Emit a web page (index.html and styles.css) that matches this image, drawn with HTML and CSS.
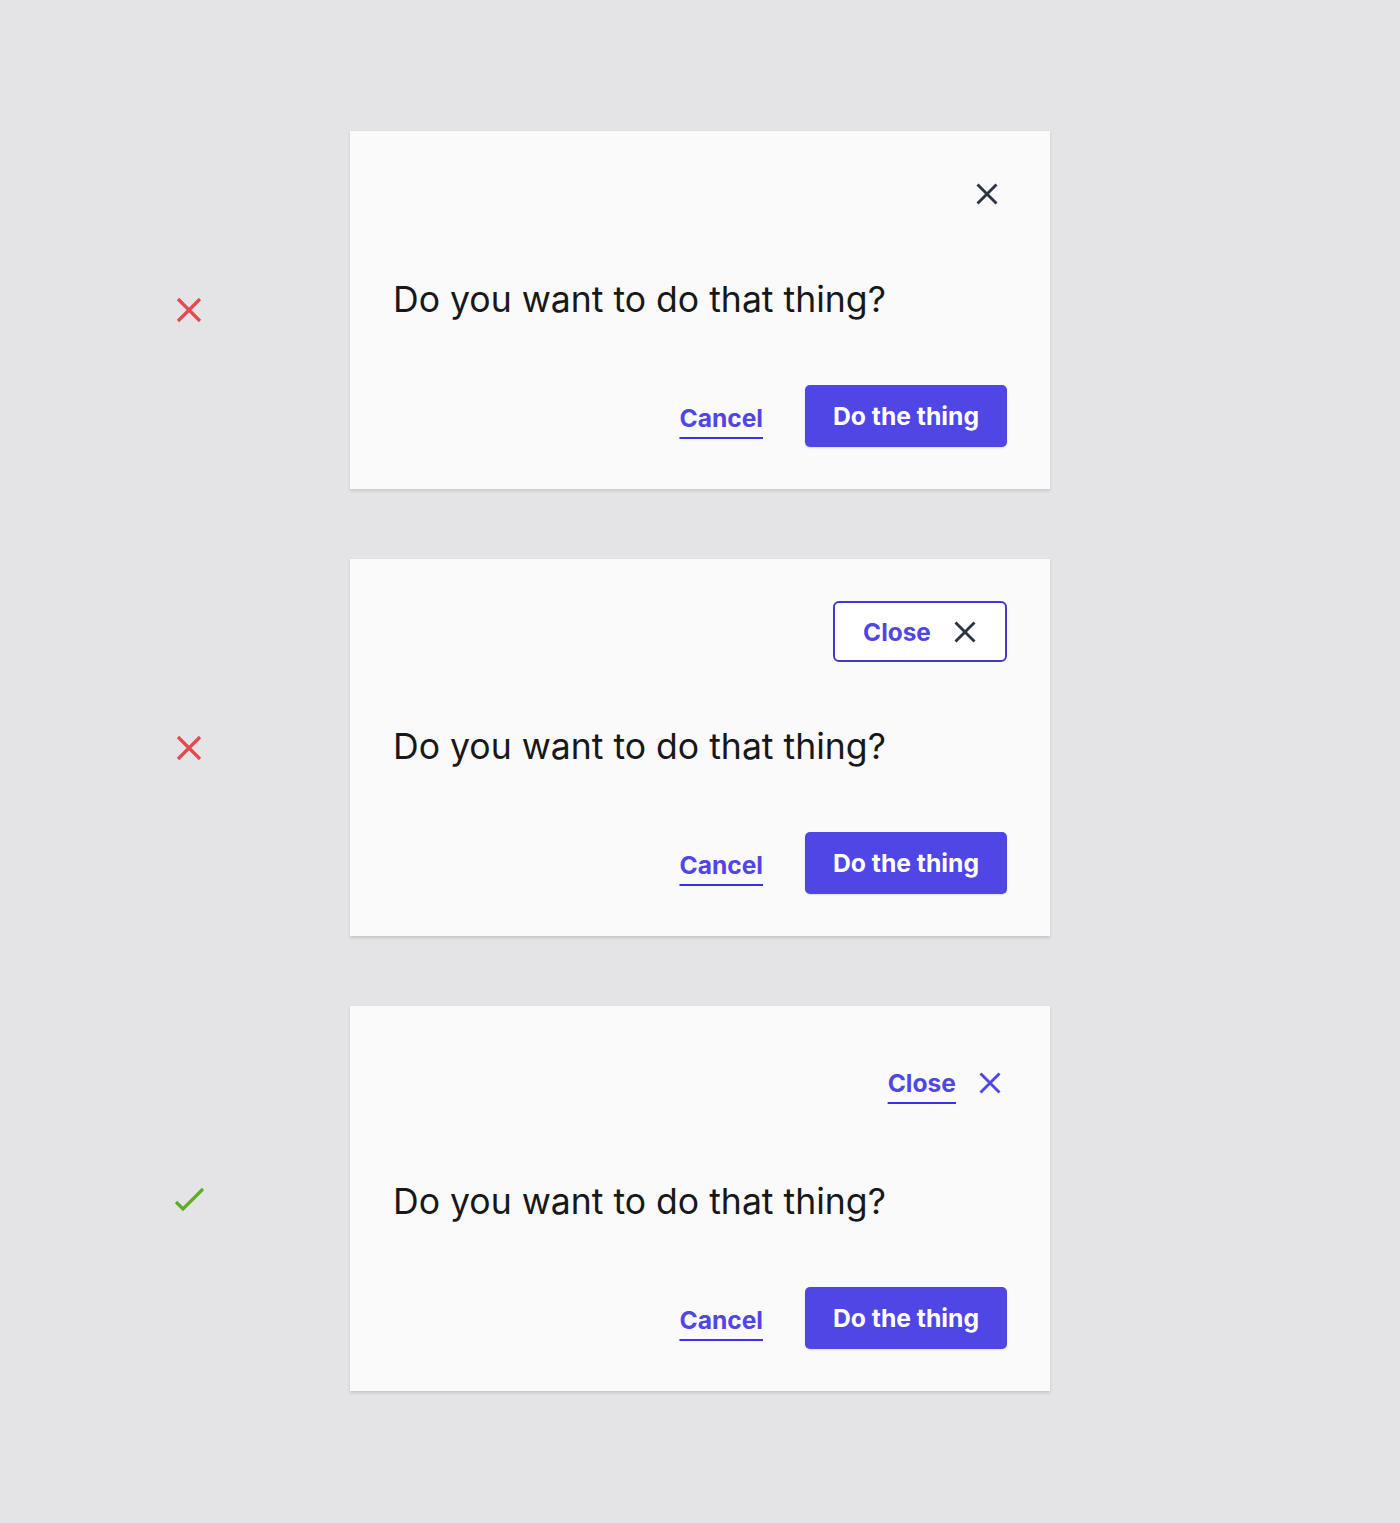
FILE: index.html
```html
<!DOCTYPE html>
<html lang="en">
<head>
<meta charset="utf-8">
<title>Dialog close patterns</title>
<link rel="stylesheet" href="styles.css">
</head>
<body>
<main class="page">
  <section class="row">
    <div class="verdict">
      <svg class="mark bad" viewBox="0 0 32 32" width="32" height="32" aria-label="Wrong"><path d="M5 5L27 27M27 5L5 27"/></svg>
    </div>
    <div class="card">
      <div class="card-head head-icon">
        <button class="icon-btn" aria-label="Close">
          <svg class="x dark" viewBox="0 0 24 24" width="24" height="24"><path d="M2.5 2.5L21.5 21.5M21.5 2.5L2.5 21.5"/></svg>
        </button>
      </div>
      <h2 class="question">Do you want to do that thing?</h2>
      <div class="actions">
        <a class="link" href="#">Cancel</a>
        <button class="primary">Do the thing</button>
      </div>
    </div>
    <div></div>
  </section>

  <section class="row">
    <div class="verdict">
      <svg class="mark bad" viewBox="0 0 32 32" width="32" height="32" aria-label="Wrong"><path d="M5 5L27 27M27 5L5 27"/></svg>
    </div>
    <div class="card">
      <div class="card-head head-button">
        <button class="outline">Close
          <svg class="x dark" viewBox="0 0 24 24" width="24" height="24"><path d="M2.5 2.5L21.5 21.5M21.5 2.5L2.5 21.5"/></svg>
        </button>
      </div>
      <h2 class="question">Do you want to do that thing?</h2>
      <div class="actions">
        <a class="link" href="#">Cancel</a>
        <button class="primary">Do the thing</button>
      </div>
    </div>
    <div></div>
  </section>

  <section class="row">
    <div class="verdict">
      <svg class="mark good" viewBox="0 0 32 32" width="32" height="32" aria-label="Right"><path d="M3 19L10 26L30 6"/></svg>
    </div>
    <div class="card">
      <div class="card-head head-link">
        <a class="link close-link" href="#">Close</a>
        <svg class="x purple" viewBox="0 0 24 24" width="24" height="24"><path d="M2.5 2.5L21.5 21.5M21.5 2.5L2.5 21.5"/></svg>
      </div>
      <h2 class="question">Do you want to do that thing?</h2>
      <div class="actions">
        <a class="link" href="#">Cancel</a>
        <button class="primary">Do the thing</button>
      </div>
    </div>
    <div></div>
  </section>
</main>
</body>
</html>
```

FILE: styles.css
```css
* { box-sizing: border-box; }

html, body {
  margin: 0;
  padding: 0;
}

body {
  background: #e4e4e7;
  font-family: "Inter", "Noto Sans", sans-serif;
  color: #18181b;
}

.page {
  padding: 131px 0 132px;
  display: flex;
  flex-direction: column;
  gap: 70px;
}

.row {
  display: grid;
  grid-template-columns: 1fr 700px 1fr;
  align-items: center;
}

.verdict {
  justify-self: end;
  margin-right: 145px;
  display: flex;
}

.mark {
  fill: none;
  stroke-width: 3.2;
  stroke-linecap: butt;
}
.mark.bad { stroke: #e5484d; }
.mark.good { stroke: #5fae1f; }

.card {
  background: #fafafa;
  padding: 42px 43px 42px 43px;
  box-shadow: 0 2px 3px rgba(0, 0, 0, 0.12), 0 0 1px rgba(0, 0, 0, 0.06);
  display: flex;
  flex-direction: column;
}

.card-head {
  display: flex;
  justify-content: flex-end;
  align-items: center;
}
.head-icon { height: 42px; padding-right: 8px; }
.head-button { height: 61px; }
.head-link { height: 69px; gap: 22px; padding-right: 5px; }

.x {
  fill: none;
  stroke-width: 2.9;
  stroke-linecap: butt;
  display: block;
}
.x.dark { stroke: #2d3444; }
.x.purple { stroke: #4f46e5; }

.icon-btn {
  background: none;
  border: 0;
  padding: 0;
  cursor: pointer;
}

.outline {
  height: 61px;
  width: 174px;
  display: flex;
  align-items: center;
  justify-content: center;
  gap: 22px;
  background: #ffffff;
  border: 2px solid #4338ca;
  border-radius: 6px;
  font-family: inherit;
  font-size: 24.4px;
  font-weight: 700;
  color: #4f46e5;
  padding: 0;
}

.question {
  margin: 65px 0;
  font-size: 35.6px;
  line-height: 40px;
  font-weight: 400;
  color: #18181b;
}

.actions {
  display: flex;
  justify-content: flex-end;
  align-items: center;
  gap: 42px;
}

.link {
  font-size: 24.6px;
  font-weight: 700;
  color: #4f46e5;
  text-decoration: underline;
  text-decoration-thickness: 2px;
  text-underline-offset: 10px;
  text-decoration-color: #3b2ff0;
}

.actions .link { margin-top: 4px; }

.primary {
  height: 62px;
  padding: 0 28px;
  background: #4f46e5;
  color: #ffffff;
  border: 0;
  border-radius: 5px;
  font-family: inherit;
  font-size: 24.7px;
  font-weight: 700;
  box-shadow: 0 1px 2px rgba(0, 0, 0, 0.12);
}
```
